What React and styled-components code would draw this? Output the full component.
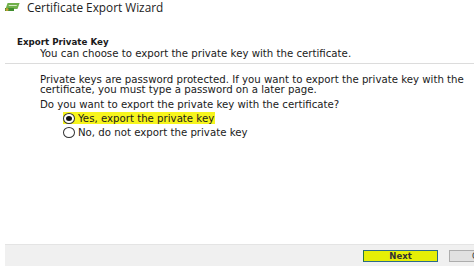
import styled, { createGlobalStyle } from "styled-components";

const Global = createGlobalStyle`
  html, body { margin: 0; padding: 0; background: #fff; }
  body { width: 474px; height: 266px; overflow: hidden; }
`;

const Wizard = styled.div`
  width: 474px;
  height: 266px;
  display: flex;
  flex-direction: column;
  font-family: "DejaVu Sans", Verdana, sans-serif;
  font-size: 10.2px;
  color: #1a1a1a;
  overflow: hidden;
`;

const TitleBar = styled.div`
  display: flex;
  align-items: center;
  gap: 6px;
  height: 14px;
  padding-left: 4px;
  font-family: "Open Sans", "Noto Sans", sans-serif;
  font-size: 11.8px;
  color: #222;
`;

const Header = styled.div`
  height: 50px;
  box-sizing: border-box;
  padding: 23px 0 0 12px;
  margin-left: 5px;
  border-bottom: 1px solid #dcdcdc;
`;

const HeaderTitle = styled.div`
  font-weight: bold;
  font-size: 8.7px;
  line-height: 11px;
`;

const HeaderText = styled.div`
  padding-left: 23px;
  line-height: 12px;
  white-space: nowrap;
`;

const Body = styled.div`
  flex: 1;
  padding: 11px 0 0 40px;
`;

const Para = styled.p`
  margin: 0 0 ${(p) => p.$gap}px 0;
  line-height: 10px;
  white-space: nowrap;
`;

const Options = styled.div`
  display: flex;
  flex-direction: column;
  gap: 2px;
  padding-left: 23px;
`;

const Option = styled.label`
  display: inline-flex;
  align-items: center;
  align-self: flex-start;
  gap: 3px;
  height: 12px;
  padding-right: 1px;
  background: ${(p) => (p.$hl ? "#f7f51c" : "transparent")};
`;

const Radio = styled.span`
  width: 12px;
  height: 11px;
  box-sizing: border-box;
  border-radius: 50%;
  border: 1px solid #333;
  background: #fff;
  display: flex;
  align-items: center;
  justify-content: center;
  &::after {
    content: "";
    width: 6px;
    height: 5px;
    border-radius: 50%;
    background: ${(p) => (p.$on ? "#111" : "transparent")};
  }
`;

const Footer = styled.div`
  height: 22px;
  margin-left: 5px;
  padding-left: 358px;
  background: #f0f0f0;
  border-top: 1px solid #e4e4e4;
  display: flex;
  align-items: center;
  gap: 11px;
  box-sizing: border-box;
`;

const Button = styled.button`
  flex: none;
  width: 75px;
  height: 12px;
  padding: 0;
  box-sizing: border-box;
  font-family: "DejaVu Sans", Verdana, sans-serif;
  font-size: 8.5px;
  font-weight: ${(p) => (p.$primary ? "bold" : "normal")};
  color: #333;
  text-align: center;
  background: ${(p) => (p.$primary ? "#e6ef07" : "#e1e1e1")};
  border: 1px solid ${(p) => (p.$primary ? "#2b6a8a" : "#adadad")};
  border-left-color: ${(p) => (p.$primary ? "#2a7a3a" : "#adadad")};
`;

function CertIcon() {
  return (
    <svg width="17" height="10" viewBox="0 0 17 10">
      <rect x="4" y="1" width="12" height="6" fill="#6fb04a" transform="skewX(-20)" />
      <rect x="6" y="3" width="8" height="1" fill="#d7ecc6" transform="skewX(-20)" />
      <rect x="1" y="6" width="9" height="3" fill="#3f8e2e" />
      <circle cx="3" cy="7.5" r="1.5" fill="#c8a033" />
    </svg>
  );
}

export default function App() {
  return (
    <>
      <Global />
      <Wizard>
        <TitleBar>
          <CertIcon />
          <span>Certificate Export Wizard</span>
        </TitleBar>
        <Header>
          <HeaderTitle>Export Private Key</HeaderTitle>
          <HeaderText>You can choose to export the private key with the certificate.</HeaderText>
        </Header>
        <Body>
          <Para $gap={5}>
            Private keys are password protected. If you want to export the private key with the
            <br />
            certificate, you must type a password on a later page.
          </Para>
          <Para $gap={2}>Do you want to export the private key with the certificate?</Para>
          <Options>
            <Option $hl>
              <Radio $on />
              Yes, export the private key
            </Option>
            <Option>
              <Radio />
              No, do not export the private key
            </Option>
          </Options>
        </Body>
        <Footer>
          <Button $primary>Next</Button>
          <Button>Cancel</Button>
        </Footer>
      </Wizard>
    </>
  );
}
